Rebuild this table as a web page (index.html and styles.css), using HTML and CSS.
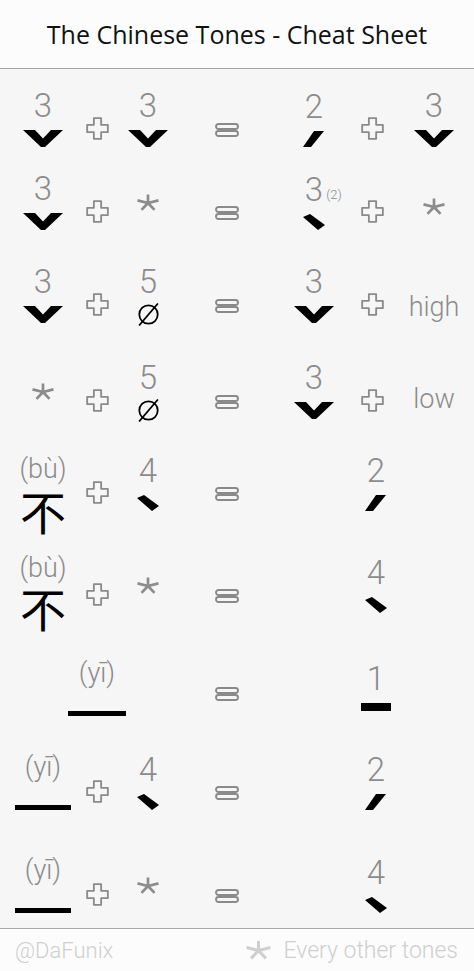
FILE: index.html
```html
<!DOCTYPE html>
<html lang="en">
<head>
    <meta charset="UTF-8">
    <meta name="viewport" content="width=device-width, initial-scale=1.0">
    <title>The Chinese Tones - Cheat Sheet</title>
    <link rel="stylesheet" href="styles.css">
</head>
<body>

    <!-- shared drawings: tone marks and the outlined operators -->
    <svg class="defs" aria-hidden="true">
        <symbol id="tone1" viewBox="0 0 30 8"><rect width="30" height="8"/></symbol>
        <symbol id="tone2" viewBox="0 0 22 16"><polygon points="11,0 21,0 8,16 0,16"/></symbol>
        <symbol id="tone3" viewBox="0 0 40 17"><polygon points="0,0 12,0 20,8.5 28,0 40,0 22,17 18,17"/></symbol>
        <symbol id="tone4" viewBox="0 0 22 16"><polygon points="0,3 7,0 22,11 15,16"/></symbol>
        <symbol id="tone5" viewBox="0 0 22 22">
            <circle cx="11" cy="11" r="8.8" fill="none" stroke="#000" stroke-width="1.7"/>
            <line x1="2" y1="21.5" x2="20" y2="0.5" stroke="#000" stroke-width="1.7"/>
        </symbol>
        <symbol id="plus" viewBox="0 0 24 24">
            <path d="M8.2 1.2h7.6v7h7v7.6h-7v7h-7.6v-7h-7v-7.6h7z" fill="none" stroke="#8a8a8a" stroke-width="1.9" stroke-linejoin="round"/>
        </symbol>
        <symbol id="equals" viewBox="0 0 24 14">
            <rect x="1" y="1" width="22" height="5" rx="2.5" fill="none" stroke="#8a8a8a" stroke-width="1.9"/>
            <rect x="1" y="8" width="22" height="5" rx="2.5" fill="none" stroke="#8a8a8a" stroke-width="1.9"/>
        </symbol>
        <symbol id="star" viewBox="0 0 22 17">
            <path d="M11 9V0.5M11 9L21.5 6.4M11 9L17.5 15.9M11 9L4.5 15.9M11 9L0.5 6.4" fill="none" stroke="currentColor" stroke-width="2.7"/>
        </symbol>
    </svg>

    <header class="title">The Chinese Tones - Cheat Sheet</header>

    <main class="sheet">
        <!-- 3 + 3 = 2 + 3 -->
        <div class="row">
            <div class="tone"><span class="num">3</span><svg class="mark m3"><use href="#tone3"/></svg></div>
            <svg class="op"><use href="#plus"/></svg>
            <div class="tone"><span class="num">3</span><svg class="mark m3"><use href="#tone3"/></svg></div>
            <svg class="eq"><use href="#equals"/></svg>
            <div class="tone"><span class="num">2</span><svg class="mark m2"><use href="#tone2"/></svg></div>
            <svg class="op"><use href="#plus"/></svg>
            <div class="tone"><span class="num">3</span><svg class="mark m3"><use href="#tone3"/></svg></div>
        </div>

        <!-- 3 + * = 3(2) + * -->
        <div class="row">
            <div class="tone"><span class="num">3</span><svg class="mark m3"><use href="#tone3"/></svg></div>
            <svg class="op"><use href="#plus"/></svg>
            <svg class="star"><use href="#star"/></svg>
            <svg class="eq"><use href="#equals"/></svg>
            <div class="tone"><span class="num">3<span class="sub">(2)</span></span><svg class="mark m4"><use href="#tone4"/></svg></div>
            <svg class="op"><use href="#plus"/></svg>
            <svg class="star star-right"><use href="#star"/></svg>
        </div>

        <!-- 3 + 5 = 3 + high -->
        <div class="row">
            <div class="tone"><span class="num">3</span><svg class="mark m3"><use href="#tone3"/></svg></div>
            <svg class="op"><use href="#plus"/></svg>
            <div class="tone"><span class="num">5</span><svg class="mark m5"><use href="#tone5"/></svg></div>
            <svg class="eq"><use href="#equals"/></svg>
            <div class="tone"><span class="num">3</span><svg class="mark m3"><use href="#tone3"/></svg></div>
            <svg class="op"><use href="#plus"/></svg>
            <span class="word">high</span>
        </div>

        <!-- * + 5 = 3 + low -->
        <div class="row">
            <svg class="star"><use href="#star"/></svg>
            <svg class="op"><use href="#plus"/></svg>
            <div class="tone"><span class="num">5</span><svg class="mark m5"><use href="#tone5"/></svg></div>
            <svg class="eq"><use href="#equals"/></svg>
            <div class="tone"><span class="num">3</span><svg class="mark m3"><use href="#tone3"/></svg></div>
            <svg class="op"><use href="#plus"/></svg>
            <span class="word word-low">low</span>
        </div>

        <!-- bù + 4 = 2 -->
        <div class="row">
            <div class="tone bu-cell"><span class="pinyin">(bù)</span><span class="hanzi">不</span></div>
            <svg class="op"><use href="#plus"/></svg>
            <div class="tone"><span class="num">4</span><svg class="mark m4"><use href="#tone4"/></svg></div>
            <svg class="eq"><use href="#equals"/></svg>
            <div class="tone result"><span class="num">2</span><svg class="mark m2"><use href="#tone2"/></svg></div>
        </div>

        <!-- bù + * = 4 -->
        <div class="row">
            <div class="tone bu-cell"><span class="pinyin">(bù)</span><span class="hanzi">不</span></div>
            <svg class="op"><use href="#plus"/></svg>
            <svg class="star"><use href="#star"/></svg>
            <svg class="eq"><use href="#equals"/></svg>
            <div class="tone result"><span class="num">4</span><svg class="mark m4"><use href="#tone4"/></svg></div>
        </div>

        <!-- yī alone = 1 -->
        <div class="row">
            <div class="tone yi-cell yi-alone"><span class="pinyin">(yī)</span><span class="yi-bar"></span></div>
            <svg class="eq"><use href="#equals"/></svg>
            <div class="tone result"><span class="num">1</span><svg class="mark m1"><use href="#tone1"/></svg></div>
        </div>

        <!-- yī + 4 = 2 -->
        <div class="row">
            <div class="tone yi-cell"><span class="pinyin">(yī)</span><span class="yi-bar"></span></div>
            <svg class="op"><use href="#plus"/></svg>
            <div class="tone"><span class="num">4</span><svg class="mark m4"><use href="#tone4"/></svg></div>
            <svg class="eq"><use href="#equals"/></svg>
            <div class="tone result"><span class="num">2</span><svg class="mark m2"><use href="#tone2"/></svg></div>
        </div>

        <!-- yī + * = 4 -->
        <div class="row">
            <div class="tone yi-cell"><span class="pinyin">(yī)</span><span class="yi-bar"></span></div>
            <svg class="op"><use href="#plus"/></svg>
            <svg class="star"><use href="#star"/></svg>
            <svg class="eq"><use href="#equals"/></svg>
            <div class="tone result"><span class="num">4</span><svg class="mark m4"><use href="#tone4"/></svg></div>
        </div>
    </main>

    <footer class="foot">
        <span>@DaFunix</span>
        <span class="legend"><svg class="legend-star"><use href="#star"/></svg>Every other tones</span>
    </footer>

</body>
</html>
```

FILE: styles.css
```css
* {
    box-sizing: border-box;
}

body {
    margin: 0;
    background: #f6f6f6;
    font-family: "Roboto", "Liberation Sans", sans-serif;
    font-weight: 300;
    color: #8c8c8c;
}

.defs {
    display: block;
    width: 0;
    height: 0;
    overflow: hidden;
}

/* header */
.title {
    height: 69px;
    background: #fcfcfc;
    border-bottom: 1px solid #a8a8a8;
    display: flex;
    align-items: center;
    justify-content: center;
    font-family: "Open Sans", "Liberation Sans", sans-serif;
    font-weight: 400;
    font-size: 25px;
    color: #111;
}

/* one equation per row, same columns for all rows */
.row {
    display: grid;
    grid-template-columns: 58px 50px 52px 106px 68px 48px 76px;
    align-items: end;
    justify-items: center;
    padding: 0 0 15px 14px;
}

.row:nth-child(1) { height: 93px; }
.row:nth-child(2) { height: 83px; }
.row:nth-child(3) { height: 93px; }
.row:nth-child(4) { height: 96px; }
.row:nth-child(5) { height: 92px; }
.row:nth-child(6) { height: 102px; }
.row:nth-child(7) { height: 98px; }
.row:nth-child(8) { height: 99px; }
.row:nth-child(9) { height: 103px; }

.tone {
    display: flex;
    flex-direction: column;
    align-items: center;
}

.num {
    position: relative;
    font-size: 33px;
    line-height: 33px;
}

.sub {
    position: absolute;
    left: 100%;
    bottom: 5px;
    margin-left: 3px;
    font-size: 13px;
    line-height: 13px;
}

.mark {
    display: block;
    margin-top: 8px;
    fill: #000;
}

.m1 { width: 30px; height: 8px; }
.m2 { width: 22px; height: 16px; }
.m3 { width: 40px; height: 17px; }
.m4 { width: 22px; height: 16px; }
.m5 { width: 23px; height: 23px; margin-top: 5px; margin-bottom: -3px; }

.op {
    width: 23px;
    height: 23px;
    margin-bottom: 7px;
}

.eq {
    grid-column: 4;
    width: 24px;
    height: 14px;
    margin-bottom: 10px;
}

.star {
    width: 22px;
    height: 17px;
    margin-bottom: 19px;
    color: #8c8c8c;
}

.star-right {
    margin-bottom: 15px;
}

.word {
    font-size: 27px;
    line-height: 27px;
    margin-bottom: 2px;
}

.word-low {
    margin-bottom: 6px;
}

.result {
    grid-column: 5 / 8;
}

/* bù and yī cells */
.pinyin {
    font-size: 27px;
    line-height: 27px;
}

.hanzi {
    font-family: "Noto Sans CJK SC", sans-serif;
    font-weight: 400;
    font-size: 46px;
    line-height: 46px;
    color: #000;
    margin-top: 4px;
}

.bu-cell {
    margin-bottom: -22px;
}

.row:nth-child(6) .bu-cell {
    margin-bottom: -17px;
}

.row:nth-child(6) .pinyin {
    margin-bottom: -2px;
}

.yi-bar {
    display: block;
    width: 56px;
    height: 5px;
    margin-top: 24px;
    background: #000;
}

.yi-alone {
    grid-column: 2;
    margin-bottom: -5px;
}

.yi-alone .yi-bar {
    width: 58px;
}

/* footer */
.foot {
    height: 43px;
    border-top: 1px solid #a8a8a8;
    background: #fcfcfc;
    display: flex;
    align-items: center;
    justify-content: space-between;
    padding: 0 16px 0 15px;
    font-size: 22px;
    color: #cfcfcf;
}

.legend {
    display: flex;
    align-items: center;
    gap: 12px;
    font-size: 23px;
}

.legend-star {
    width: 25px;
    height: 20px;
    color: #cfcfcf;
}
```
